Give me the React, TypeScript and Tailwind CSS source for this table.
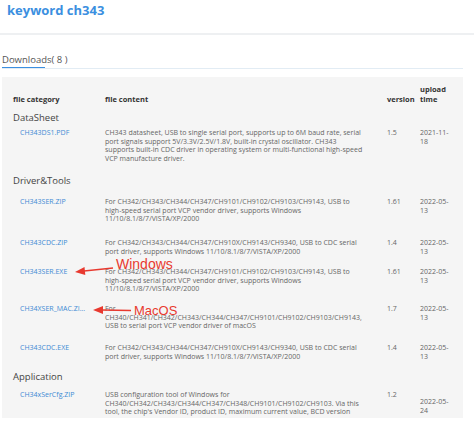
type FileRow = {
  name: string;
  lines: string[];
  ver: string;
  date: string[];
  rowCls: string;
  dateCls?: string;
};

type Section = { title: string; rows: FileRow[] };

const serLines = [
  "For CH342/CH343/CH344/CH347/CH9101/CH9102/CH9103/CH9143, USB to",
  "high-speed serial port VCP vendor driver, supports Windows",
  "11/10/8.1/8/7/VISTA/XP/2000",
];

const cdcLines = [
  "For CH342/CH343/CH344/CH347/CH910X/CH9143/CH9340, USB to CDC serial",
  "port driver, supports Windows 11/10/8.1/8/7/VISTA/XP/2000",
];

const sections: Section[] = [
  {
    title: "DataSheet",
    rows: [
      {
        name: "CH343DS1.PDF",
        lines: [
          "CH343 datasheet, USB to single serial port, supports up to 6M baud rate, serial",
          "port signals support 5V/3.3V/2.5V/1.8V, built-in crystal oscillator. CH343",
          "supports built-in CDC driver in operating system or multi-functional high-speed",
          "VCP manufacture driver.",
        ],
        ver: "1.5",
        date: ["2021-11-", "18"],
        rowCls: "h-[43px] pt-[1px]",
      },
    ],
  },
  {
    title: "Driver&Tools",
    rows: [
      { name: "CH343SER.ZIP", lines: serLines, ver: "1.61", date: ["2022-05-", "13"], rowCls: "h-[41px] pt-[7px]" },
      { name: "CH343CDC.ZIP", lines: cdcLines, ver: "1.4", date: ["2022-05-", "13"], rowCls: "h-[29px] pt-[7px]" },
      { name: "CH343SER.EXE", lines: serLines, ver: "1.61", date: ["2022-05-", "13"], rowCls: "h-[37px] pt-[7px]" },
      {
        name: "CH34XSER_MAC.ZI...",
        lines: [
          "For",
          "CH340/CH341/CH342/CH343/CH344/CH347/CH9101/CH9102/CH9103/CH9143,",
          "USB to serial port VCP vendor driver of macOS",
        ],
        ver: "1.7",
        date: ["2022-05-", "13"],
        rowCls: "h-[39px] pt-[7px]",
      },
      { name: "CH343CDC.EXE", lines: cdcLines, ver: "1.4", date: ["2022-05-", "13"], rowCls: "h-[30px] pt-[7px]" },
    ],
  },
  {
    title: "Application",
    rows: [
      {
        name: "CH34xSerCfg.ZIP",
        lines: [
          "USB configuration tool of Windows for",
          "CH340/CH342/CH343/CH344/CH347/CH348/CH9101/CH9102/CH9103. Via this",
          "tool, the chip's Vendor ID, product ID, maximum current value, BCD version",
        ],
        ver: "1.2",
        date: ["2022-05-", "24"],
        rowCls: "h-[31px] pt-[4px]",
        dateCls: "pt-[7px]",
      },
    ],
  },
];

function Row({ row }: { row: FileRow }) {
  return (
    <div className={`flex overflow-hidden text-[7px] leading-[8.5px] ${row.rowCls}`}>
      <div className="w-[103px] shrink-0 pl-[18px] whitespace-nowrap text-[#3d8ad4]">{row.name}</div>
      <div className="w-[282px] shrink-0 text-[#666]">
        {row.lines.map((l, i) => (
          <div key={i} className="whitespace-nowrap">
            {l}
          </div>
        ))}
      </div>
      <div className="w-[33px] shrink-0 text-[#666]">{row.ver}</div>
      <div className={`flex-1 text-[#666] ${row.dateCls ?? ""}`}>
        {row.date.map((d, i) => (
          <div key={i}>{d}</div>
        ))}
      </div>
    </div>
  );
}

export default function App() {
  return (
    <div className="relative w-[474px] h-[422px] overflow-hidden bg-white font-['Open_Sans',sans-serif]">
      <div className="h-[33px] pl-[7px] pt-[2px] text-[13px] font-bold leading-[16px] text-[#3b8fe0]">
        keyword ch343
      </div>
      <div className="h-[2px] bg-[#eef0f2]" />

      <div className="ml-[2px] w-[461px] mt-[18px]">
        <div className="text-[9.5px] leading-[14px] text-[#555]">Downloads( 8 )</div>
        <div className="h-[2px] w-[43px] bg-[#3b8fe0]" />
        <div className="h-px -mt-px bg-[#e2ecf4]" />

        <div className="mt-[8px] h-[341px] overflow-hidden bg-[#f5f5f5]">
          <div className="flex h-[31px] items-end pb-[4px] text-[7.5px] font-bold leading-[10px] text-[#333]">
            <div className="w-[103px] shrink-0 pl-[11px]">file category</div>
            <div className="w-[282px] shrink-0">file content</div>
            <div className="w-[33px] shrink-0">version</div>
            <div className="flex-1">
              <div>upload</div>
              <div>time</div>
            </div>
          </div>

          {sections.map((s) => (
            <div key={s.title}>
              <div className="h-[20px] pl-[11px] text-[9.5px] leading-[20px] text-[#444]">{s.title}</div>
              {s.rows.map((r) => (
                <Row key={r.name} row={r} />
              ))}
            </div>
          ))}
        </div>
      </div>

      {/* red annotations drawn over the table */}
      <svg className="pointer-events-none absolute inset-0" width="474" height="422">
        <line x1="113" y1="268" x2="84" y2="271" stroke="#e8392f" strokeWidth="1.6" />
        <polygon points="75,272 85.3,274.9 84.5,267" fill="#e8392f" />
        <line x1="131" y1="310.5" x2="102" y2="310" stroke="#e8392f" strokeWidth="1.6" />
        <polygon points="93,310 103,306 103,314" fill="#e8392f" />
      </svg>
      <div className="pointer-events-none absolute left-[116px] top-[257px] font-['Liberation_Sans',sans-serif] text-[14px] leading-[14px] text-[#e8392f]">
        Windows
      </div>
      <div className="pointer-events-none absolute left-[134px] top-[304px] font-['Liberation_Sans',sans-serif] text-[13px] leading-[13px] text-[#e8392f]">
        MacOS
      </div>
    </div>
  );
}
